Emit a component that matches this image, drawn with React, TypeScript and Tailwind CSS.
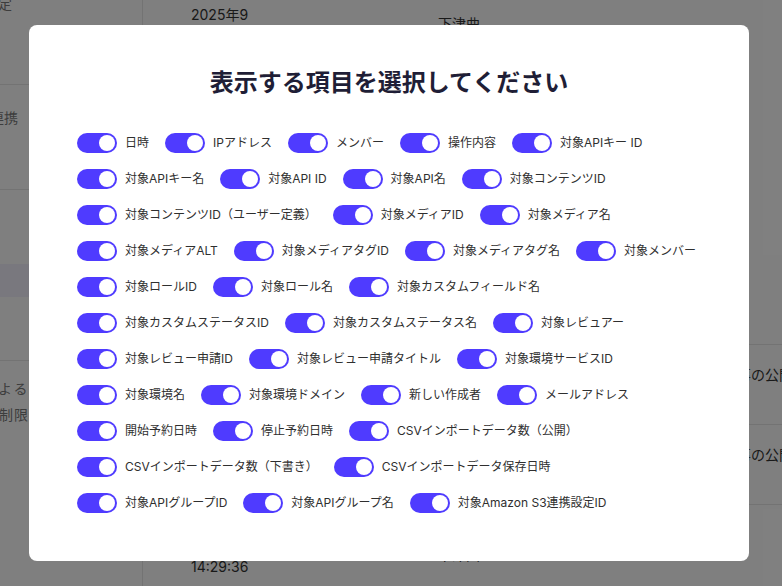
import React from "react";

const items = [
  "日時",
  "IPアドレス",
  "メンバー",
  "操作内容",
  "対象APIキー ID",
  "対象APIキー名",
  "対象API ID",
  "対象API名",
  "対象コンテンツID",
  "対象コンテンツID（ユーザー定義）",
  "対象メディアID",
  "対象メディア名",
  "対象メディアALT",
  "対象メディアタグID",
  "対象メディアタグ名",
  "対象メンバー",
  "対象ロールID",
  "対象ロール名",
  "対象カスタムフィールド名",
  "対象カスタムステータスID",
  "対象カスタムステータス名",
  "対象レビュアー",
  "対象レビュー申請ID",
  "対象レビュー申請タイトル",
  "対象環境サービスID",
  "対象環境名",
  "対象環境ドメイン",
  "新しい作成者",
  "メールアドレス",
  "開始予約日時",
  "停止予約日時",
  "CSVインポートデータ数（公開）",
  "CSVインポートデータ数（下書き）",
  "CSVインポートデータ保存日時",
  "対象APIグループID",
  "対象APIグループ名",
  "対象Amazon S3連携設定ID",
];

function Toggle() {
  return (
    <span className="flex h-5 w-10 shrink-0 items-center justify-end rounded-full bg-[#4f3bff] px-[2px]">
      <span className="h-4 w-4 rounded-full bg-white" />
    </span>
  );
}

function Row({
  h,
  pt,
  date,
  author,
  authorPt,
  op,
  opPt,
  border = true,
}: {
  h: number;
  pt: string;
  date: string[];
  author?: string;
  authorPt?: string;
  op?: string;
  opPt?: string;
  border?: boolean;
}) {
  return (
    <div
      className={`flex shrink-0 ${border ? "border-b border-[#e6e6e6]" : ""}`}
      style={{ height: h }}
    >
      <div className="w-[48px] shrink-0" />
      <div className={`w-[247px] shrink-0 text-[14px] leading-5 text-[#333] ${pt}`}>
        {date.map((d, i) => (
          <div key={i} className="w-[60px] whitespace-nowrap">
            {d}
          </div>
        ))}
      </div>
      <div className={`w-[285px] shrink-0 whitespace-nowrap text-[14px] leading-5 text-[#333] ${authorPt ?? ""}`}>
        {author}
      </div>
      <div className={`min-w-0 flex-1 overflow-hidden whitespace-nowrap text-[14px] leading-5 text-[#333] ${opPt ?? ""}`}>
        {op}
      </div>
    </div>
  );
}

export default function App() {
  return (
    <div
      className="relative h-[586px] w-[782px] overflow-hidden bg-white"
      style={{ fontFamily: 'Inter, "Noto Sans CJK JP", sans-serif' }}
    >
      {/* underlying page */}
      <div className="flex h-full">
        <aside className="flex w-[143px] shrink-0 flex-col overflow-hidden border-r border-[#e6e6e6] text-[14px] text-[#7a7a7a]">
          <div className="h-[85px] shrink-0 overflow-hidden border-b border-[#e6e6e6]">
            <div className="-ml-[16px] -mt-[6px] whitespace-nowrap leading-5">設定</div>
          </div>
          <div className="h-[105px] shrink-0 border-b border-[#e6e6e6] pt-[23px]">
            <div className="-ml-[10px] whitespace-nowrap leading-5">連携</div>
          </div>
          <div className="flex h-[171px] shrink-0 flex-col border-b border-[#e6e6e6] pt-[13px]">
            <div className="-ml-[14px] h-[30px] whitespace-nowrap leading-5">定</div>
            <div className="-ml-[14px] h-[31px] whitespace-nowrap leading-5">定</div>
            <div className="h-[33px] bg-[#f3f0fd]" />
          </div>
          <div className="pt-[18px]">
            <div className="-ml-[2px] h-[26px] whitespace-nowrap leading-5 tracking-[2px]">よる制限</div>
            <div className="-ml-[1px] whitespace-nowrap leading-5 tracking-[1px]">制限</div>
          </div>
        </aside>
        <main className="flex min-w-0 flex-1 flex-col overflow-hidden">
          <Row
            h={345}
            pt="pt-[5px]"
            date={["2025年9", "月16日", "14:29:36"]}
            author="下津曲"
            authorPt="pt-[14px]"
          />
          <Row h={80} pt="pt-[10px]" date={["2025年9", "月16日", "14:29:36"]} author="下津曲" authorPt="pt-[30px]" op="記事の公開" opPt="pt-[20px]" />
          <Row h={80} pt="pt-[10px]" date={["2025年9", "月16日", "14:29:36"]} author="下津曲" authorPt="pt-[30px]" op="記事の公開" opPt="pt-[20px]" />
          <Row h={81} pt="pt-[12px]" date={["2025年9", "月16日", "14:29:36"]} author="下津曲" authorPt="pt-[40px]" op="" border={false} />
        </main>
      </div>

      {/* overlay */}
      <div className="absolute inset-0 flex items-center bg-black/50 pl-[29px]">
        <div className="w-[720px] rounded-lg bg-white px-[48px] pb-[48px] pt-[42px]">
          <h2 className="text-center text-[24px] font-bold leading-8 text-[#1f1e36]">
            表示する項目を選択してください
          </h2>
          <div className="mt-[34px] flex flex-wrap gap-x-4 gap-y-4">
            {items.map((it) => (
              <label key={it} className="flex items-center gap-2">
                <Toggle />
                <span className="whitespace-nowrap text-[12px] leading-5 text-[#2f2f2f]">{it}</span>
              </label>
            ))}
          </div>
        </div>
      </div>
    </div>
  );
}
